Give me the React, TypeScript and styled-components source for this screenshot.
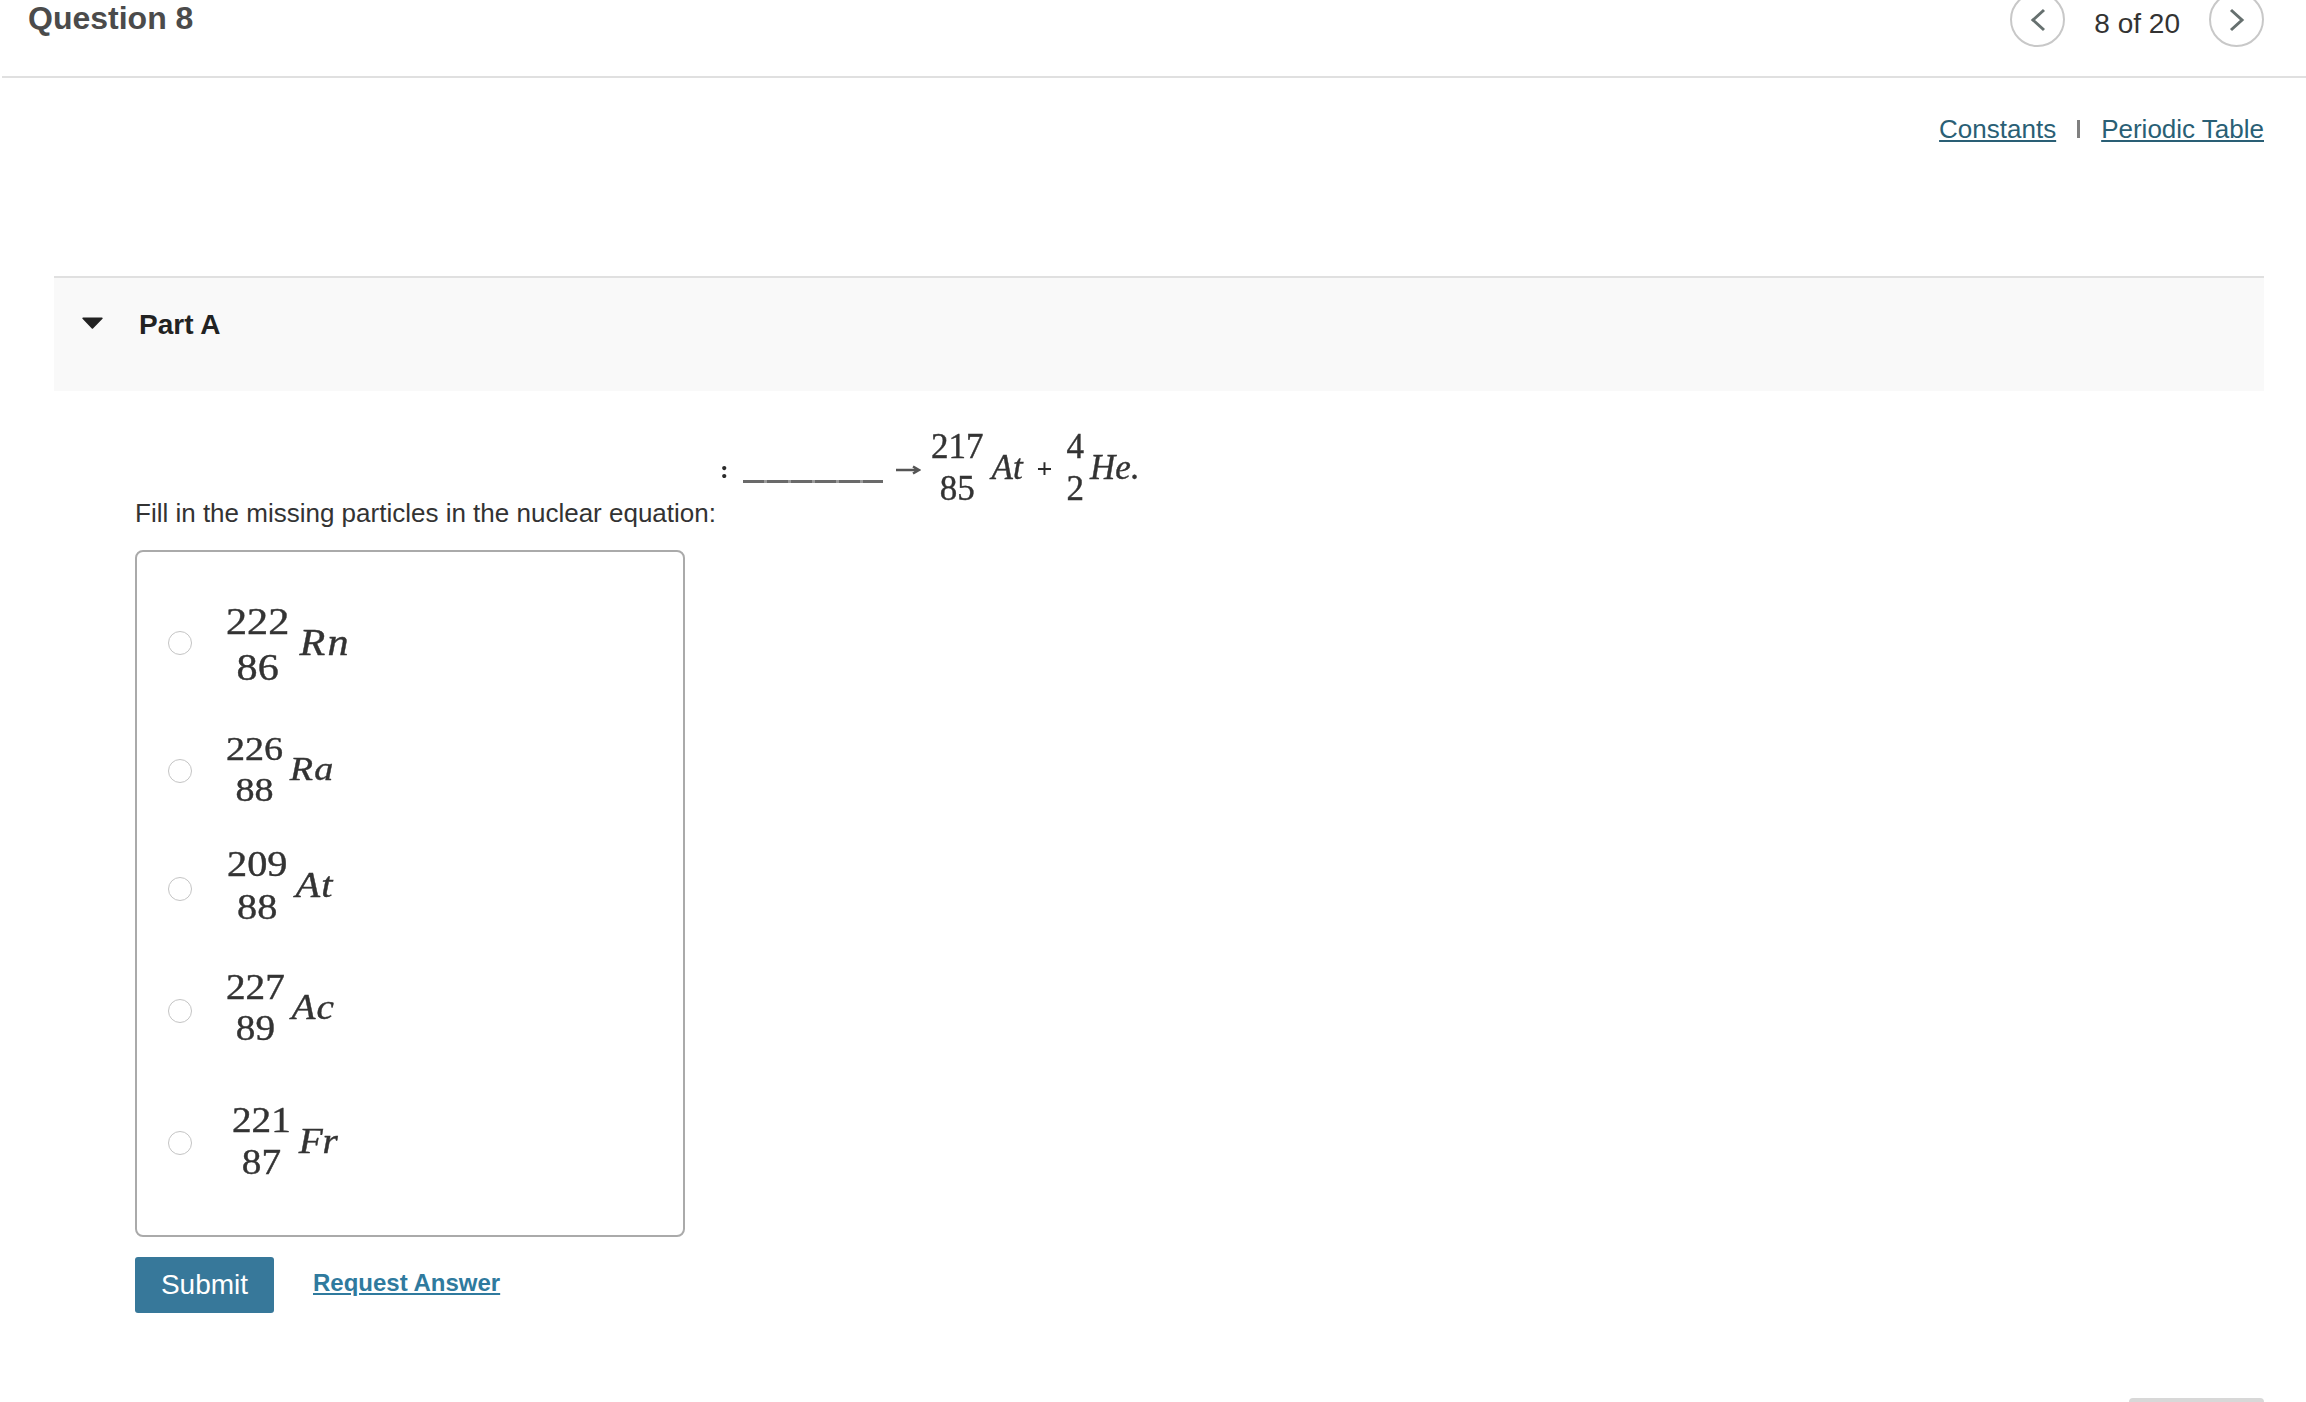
import React from "react";
import styled, { createGlobalStyle } from "styled-components";

const GlobalStyle = createGlobalStyle`
  html, body {
    margin: 0;
    padding: 0;
    height: 1402px;
    overflow: hidden;
    background: #fff;
    font-family: "Liberation Sans", Arial, sans-serif;
  }
`;

const Page = styled.div`
  position: relative;
  height: 1402px;
  overflow: hidden;
`;

const Header = styled.header`
  display: flex;
  justify-content: space-between;
  align-items: flex-start;
  height: 76px;
  margin-left: 2px;
  padding: 0 42px 0 26px;
  border-bottom: 2px solid #e0e0e0;
`;

const Title = styled.h1`
  margin: 0;
  font-size: 32px;
  line-height: 37px;
  font-weight: 700;
  color: #4b4b4b;
`;

const Pager = styled.nav`
  display: flex;
  align-items: center;
  gap: 29px;
  margin-top: -8px;
`;

const PagerButton = styled.button`
  display: flex;
  align-items: center;
  justify-content: center;
  width: 55px;
  height: 55px;
  padding: 0;
  border: 2px solid #c8c8c8;
  border-radius: 50%;
  background: #fff;
`;

const PagerText = styled.span`
  padding-top: 8px;
  font-size: 28px;
  line-height: 32px;
  color: #333;
`;

const ToolLinks = styled.div`
  display: flex;
  justify-content: flex-end;
  align-items: center;
  gap: 21px;
  height: 198px;
  padding: 0 42px 96px 0;
  box-sizing: border-box;
`;

const ToolLink = styled.a`
  font-size: 26px;
  line-height: 30px;
  color: #2a5f75;
  text-decoration: underline;
`;

const Divider = styled.span`
  width: 3px;
  height: 18px;
  background: #808080;
`;

const PartHeader = styled.div`
  display: flex;
  align-items: center;
  height: 93px;
  margin: 0 42px 0 54px;
  padding: 0 0 20px 28px;
  background: #f9f9f9;
  border-top: 2px solid #e0e0e0;
`;

const PartCaret = styled.svg`
  width: 21px;
  height: 12px;
  margin-right: 36px;
  margin-top: -4px;
`;

const PartTitle = styled.h2`
  margin: 0;
  font-size: 28px;
  line-height: 32px;
  font-weight: 700;
  color: #222;
`;

const Content = styled.main`
  padding: 35px 0 0 135px;
`;

const Question = styled.div`
  display: flex;
  align-items: flex-start;
  height: 106px;
`;

const Prompt = styled.p`
  align-self: flex-end;
  margin: 0 0 3px;
  width: 588px;
  font-size: 26px;
  line-height: 32px;
  color: #333;
`;

const Equation = styled.div`
  display: flex;
  align-items: center;
  height: 84px;
  color: #2b2b2b;
`;

const Colon = styled.span`
  width: 23px;
  margin: 4px 0 0 -3px;
  font-family: "Liberation Serif", serif;
  font-size: 26px;
  font-weight: 700;
  filter: blur(0.5px);
`;

const Blank = styled.span`
  width: 140px;
  height: 3px;
  margin-top: 26px;
  background: repeating-linear-gradient(90deg, #6a6a6a 0 21px, #9a9a9a 21px 24px);
  filter: blur(0.5px);
`;

const Arrow = styled.svg`
  width: 26px;
  height: 10px;
  margin: 4px 10px 0 12px;
  filter: blur(0.5px);
`;

const Plus = styled.span`
  margin: 2px 14px 0 14px;
  font-family: "Liberation Serif", serif;
  font-size: 28px;
  font-weight: 700;
  filter: blur(0.5px);
`;

const Choices = styled.div`
  box-sizing: border-box;
  width: 550px;
  height: 687px;
  padding: 51px 0 0 31px;
  margin-top: 18px;
  border: 2px solid #aaa;
  border-radius: 8px;
`;

const Choice = styled.label<{ $gap: number }>`
  display: flex;
  align-items: center;
  height: 80px;
  margin-top: ${(p) => p.$gap}px;
`;

const Radio = styled.span`
  flex: none;
  box-sizing: border-box;
  width: 24px;
  height: 24px;
  border: 1.5px solid #c4c4c4;
  border-radius: 50%;
  background: #fff;
`;

const Formula = styled.span<{ $size: number; $stretch: number; $left: number; $shift: number }>`
  display: inline-flex;
  align-items: center;
  margin-left: ${(p) => p.$left}px;
  margin-top: ${(p) => p.$shift}px;
  font-family: "Liberation Serif", "Times New Roman", serif;
  font-size: ${(p) => p.$size}px;
  color: #333;
  -webkit-text-stroke: 0.4px #333;
  transform: scaleX(${(p) => p.$stretch});
  transform-origin: left center;
  filter: blur(0.6px);
`;

const Numbers = styled.span<{ $lead: number }>`
  display: flex;
  flex-direction: column;
  align-items: center;
  line-height: ${(p) => p.$lead}px;
`;

const Symbol = styled.i<{ $gap: number; $track?: number; $lift?: number }>`
  margin-left: ${(p) => p.$gap}px;
  margin-top: ${(p) => -(p.$lift || 0)}px;
  letter-spacing: ${(p) => p.$track || 0}px;
`;

const Actions = styled.div`
  display: flex;
  align-items: flex-start;
  gap: 39px;
  margin-top: 20px;
`;

const SubmitButton = styled.button`
  width: 139px;
  height: 56px;
  padding: 0;
  border: 0;
  border-radius: 3px;
  background: #37789a;
  color: #fff;
  font-family: inherit;
  font-size: 28px;
`;

const AnswerLink = styled.a`
  margin-top: 12px;
  font-size: 24px;
  line-height: 28px;
  font-weight: 700;
  color: #2f7a9e;
  text-decoration: underline;
`;

const BottomTab = styled.div`
  position: absolute;
  right: 42px;
  bottom: 0;
  width: 135px;
  height: 4px;
  border-radius: 4px 4px 0 0;
  background: #d8d8d8;
`;

const options = [
  { mass: "222", atomic: "86", symbol: "Rn", size: 37, stretch: 1.14, lead: 46, gap: 0, left: 34, shift: 4, symGap: 9, track: 2, lift: 5 },
  { mass: "226", atomic: "88", symbol: "Ra", size: 34, stretch: 1.12, lead: 41, gap: 48, left: 34, shift: -5, symGap: 6, track: 1, lift: 0 },
  { mass: "209", atomic: "88", symbol: "At", size: 35, stretch: 1.15, lead: 43, gap: 38, left: 35, shift: -6, symGap: 7, track: 1, lift: 0 },
  { mass: "227", atomic: "89", symbol: "Ac", size: 35, stretch: 1.12, lead: 41, gap: 42, left: 34, shift: -6, symGap: 6, track: 1, lift: 0 },
  { mass: "221", atomic: "87", symbol: "Fr", size: 35, stretch: 1.12, lead: 42, gap: 52, left: 40, shift: -2, symGap: 7, track: 0, lift: 0 },
];

const App: React.FC = () => {
  return (
    <Page>
      <GlobalStyle />
      <Header>
        <Title>Question 8</Title>
        <Pager>
          <PagerButton aria-label="Previous">
            <svg width="18" height="26" viewBox="0 0 18 26">
              <path d="M15 3 L4 13 L15 23" fill="none" stroke="#66706f" strokeWidth="3" />
            </svg>
          </PagerButton>
          <PagerText>8 of 20</PagerText>
          <PagerButton aria-label="Next">
            <svg width="18" height="26" viewBox="0 0 18 26">
              <path d="M3 3 L14 13 L3 23" fill="none" stroke="#66706f" strokeWidth="3" />
            </svg>
          </PagerButton>
        </Pager>
      </Header>

      <ToolLinks>
        <ToolLink href="#">Constants</ToolLink>
        <Divider />
        <ToolLink href="#">Periodic Table</ToolLink>
      </ToolLinks>

      <PartHeader>
        <PartCaret viewBox="0 0 21 12">
          <path d="M1 0.5 H20 a0.7 0.7 0 0 1 0.5 1.2 L11 11.5 a0.8 0.8 0 0 1 -1.2 0 L0.5 1.7 A0.7 0.7 0 0 1 1 0.5 Z" fill="#222" />
        </PartCaret>
        <PartTitle>Part A</PartTitle>
      </PartHeader>

      <Content>
        <Question>
          <Prompt>Fill in the missing particles in the nuclear equation:</Prompt>
          <Equation>
            <Colon>:</Colon>
            <Blank />
            <Arrow viewBox="0 0 26 10">
              <path d="M1 5 H22 M18 1.5 L24 5 L18 8.5" fill="none" stroke="#555" strokeWidth="2.5" />
            </Arrow>
            <Formula $size={35} $stretch={1} $left={0} $shift={0}>
              <Numbers $lead={42}>
                <span>217</span>
                <span>85</span>
              </Numbers>
              <Symbol $gap={8}>At</Symbol>
            </Formula>
            <Plus>+</Plus>
            <Formula $size={35} $stretch={1} $left={0} $shift={0}>
              <Numbers $lead={42}>
                <span>4</span>
                <span>2</span>
              </Numbers>
              <Symbol $gap={6}>He.</Symbol>
            </Formula>
          </Equation>
        </Question>

        <Choices>
          {options.map((o) => (
            <Choice key={o.mass} $gap={o.gap}>
              <Radio />
              <Formula $size={o.size} $stretch={o.stretch} $left={o.left} $shift={o.shift}>
                <Numbers $lead={o.lead}>
                  <span>{o.mass}</span>
                  <span>{o.atomic}</span>
                </Numbers>
                <Symbol $gap={o.symGap} $track={o.track} $lift={o.lift}>
                  {o.symbol}
                </Symbol>
              </Formula>
            </Choice>
          ))}
        </Choices>

        <Actions>
          <SubmitButton>Submit</SubmitButton>
          <AnswerLink href="#">Request Answer</AnswerLink>
        </Actions>
      </Content>

      <BottomTab />
    </Page>
  );
};

export default App;
